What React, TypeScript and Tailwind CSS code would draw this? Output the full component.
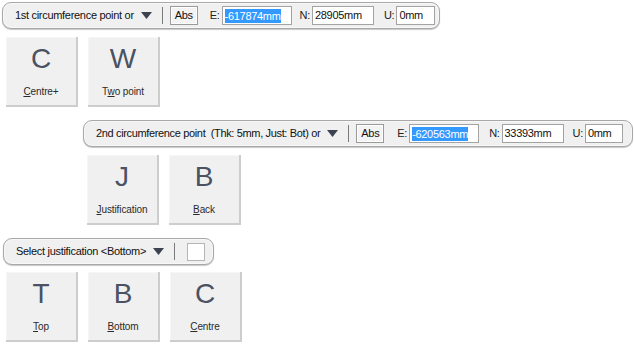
import React from "react";

const font = { fontFamily: '"Liberation Sans", Arial, sans-serif' };

function Tri() {
  return (
    <svg width="11" height="7" viewBox="0 0 11 7" className="block">
      <path d="M0 0 H11 L5.5 7 Z" fill="#3c4250" />
    </svg>
  );
}

function Sep() {
  return <div className="w-px h-[17px] bg-[#7a7a7a]" />;
}

function Field({ label, value, w, sel, lm }: { label: string; value: string; w: string; sel?: boolean; lm: string }) {
  return (
    <div className={`flex flex-none items-center ${lm}`}>
      <span className="text-[#222] mr-[2px]">{label}</span>
      <div className={`${w} h-[19px] bg-white border border-[#a3a3a3] flex items-center pl-[2px]`}>
        {sel ? (
          <span className="bg-[#3399ff] text-white leading-[14px] px-0">{value}</span>
        ) : (
          <span className="text-[#111]">{value}</span>
        )}
      </div>
    </div>
  );
}

function Abs({ lm }: { lm: string }) {
  return (
    <div className={`${lm} flex-none h-[19px] w-[28px] border border-[#9a9a9a] bg-[#f3f3f3] flex items-center justify-center text-[#111] shadow-[inset_0_0_0_1px_#ffffff]`}>
      Abs
    </div>
  );
}

function Btn({ letter, pre, u, post }: { letter: string; pre?: string; u: string; post: string }) {
  return (
    <div className="w-[72px] h-[70px] bg-[#f0f0f0] border-r-2 border-b-2 border-[#cdcdcd] flex flex-col items-center shadow-[inset_1px_1px_0_#f6f6f6]">
      <div className="mt-[8px] h-[28px] text-[28px] leading-[28px] text-[#4a5263]">{letter}</div>
      <div className="mt-[13px] text-[10px] leading-[12px] text-[#2a2a2a] tracking-[-0.1px]">
        {pre}
        <span className="underline underline-offset-[1px]">{u}</span>
        {post}
      </div>
    </div>
  );
}

function Bar({ children, ml, mt, pr }: { children: React.ReactNode; ml: string; mt: string; pr: string }) {
  return (
    <div className={`${ml} ${mt} self-start flex-none whitespace-nowrap h-[27px] flex items-center pl-[12px] ${pr} rounded-[9px] border border-[#a8a8a8] bg-[#f0f0f0] shadow-[0_1px_1px_#c8c8c8,inset_0_0_0_1px_#f8f8f8] text-[11px] tracking-[-0.3px] text-[#111]`}>
      {children}
    </div>
  );
}

export default function App() {
  return (
    <div className="w-[634px] h-[346px] bg-white flex flex-col overflow-hidden" style={font}>
      <Bar ml="ml-[2px]" mt="mt-[2px]" pr="pr-[4px]">
        <span className="flex-none">1st circumference point or</span>
        <div className="ml-[7px] flex-none"><Tri /></div>
        <div className="ml-[10px] flex-none"><Sep /></div>
        <Abs lm="ml-[7px]" />
        <Field lm="ml-[12px]" label="E:" value="-617874mm" w="w-[70px]" sel />
        <Field lm="ml-[8px]" label="N:" value="28905mm" w="w-[62px]" />
        <Field lm="ml-[10px]" label="U:" value="0mm" w="w-[39px]" />
      </Bar>
      <div className="flex gap-[10px] ml-[6px] mt-[8px]">
        <Btn letter="C" u="C" post="entre+" />
        <Btn letter="W" pre="T" u="w" post="o point" />
      </div>

      <Bar ml="ml-[83px]" mt="mt-[13px]" pr="pr-[9px]">
        <span className="flex-none tracking-[-0.35px]">2nd circumference point&nbsp; (Thk: 5mm, Just: Bot) or</span>
        <div className="ml-[7px] flex-none"><Tri /></div>
        <div className="ml-[10px] flex-none"><Sep /></div>
        <Abs lm="ml-[7px]" />
        <Field lm="ml-[13px]" label="E:" value="-620563mm" w="w-[70px]" sel />
        <Field lm="ml-[10px]" label="N:" value="33393mm" w="w-[62px]" />
        <Field lm="ml-[9px]" label="U:" value="0mm" w="w-[38px]" />
      </Bar>
      <div className="flex gap-[10px] ml-[87px] mt-[8px]">
        <Btn letter="J" u="J" post="ustification" />
        <Btn letter="B" u="B" post="ack" />
      </div>

      <Bar ml="ml-[3px]" mt="mt-[13px]" pr="pr-[8px]">
        <span className="flex-none">Select justification &lt;Bottom&gt;</span>
        <div className="ml-[7px] flex-none"><Tri /></div>
        <div className="ml-[10px] flex-none"><Sep /></div>
        <div className="ml-[12px] flex-none w-[18px] h-[18px] bg-white border border-[#b5b5b5]" />
      </Bar>
      <div className="flex gap-[10px] ml-[6px] mt-[7px]">
        <Btn letter="T" u="T" post="op" />
        <Btn letter="B" u="B" post="ottom" />
        <Btn letter="C" u="C" post="entre" />
      </div>
    </div>
  );
}
